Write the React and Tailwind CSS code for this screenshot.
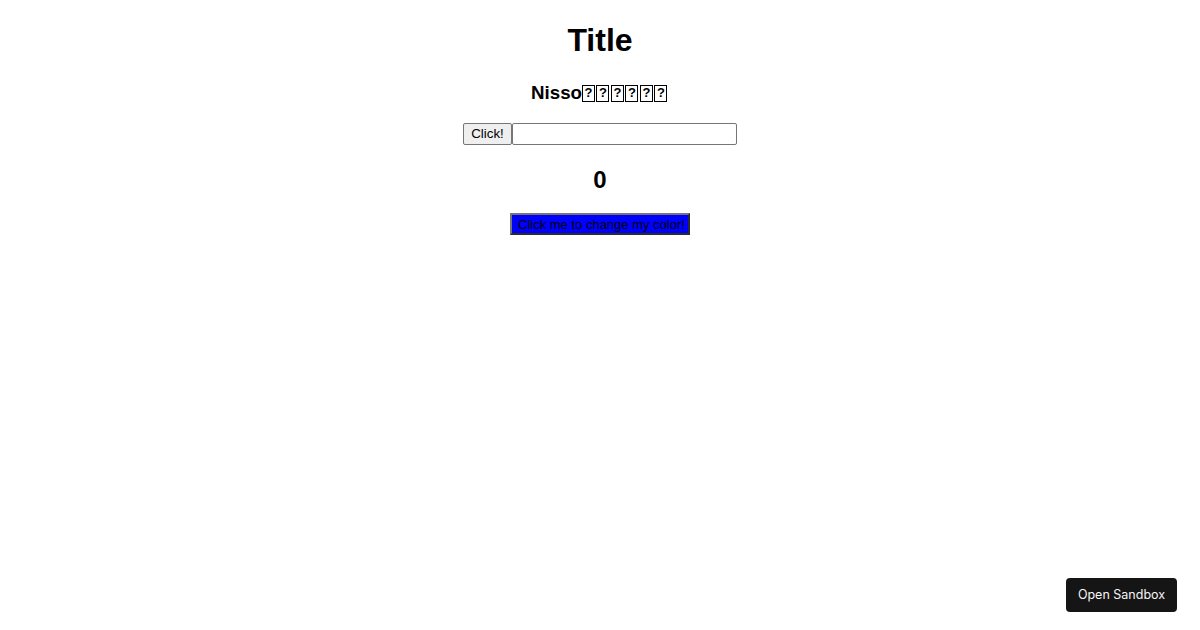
function Tofu() {
  return (
    <span className="mr-[1.5px] inline-block h-[17px] w-[13px] border-[1.5px] border-black text-center align-[2px] text-[13px] leading-[14px] font-bold">?</span>
  );
}

export default function App() {
  return (
    <div className="min-h-[630px] bg-white font-['Liberation_Sans',Arial,sans-serif] text-black">
      <div className="flex flex-col items-center px-2 pt-[21.5px]">
        <h1 className="text-[32px] font-bold leading-[normal]">Title</h1>
        <h3 className="mt-[22.44px] flex h-[24px] items-center text-[18.72px] font-bold leading-[24px]">
          <span>Nisso<Tofu /><Tofu /><Tofu /><Tofu /><Tofu /><Tofu /></span>
        </h3>
        <div className="mt-[17.72px] flex items-center">
          <button className="h-[22px] w-[49px] rounded-[2px] border border-[#767676] bg-[#efefef] px-[6px] text-[13.33px] leading-[15px] whitespace-nowrap">Click!</button>
          <input className="h-[22px] w-[225px] rounded-[2px] border border-[#767676] bg-white px-[2px] text-[13.33px] outline-none" />
        </div>
        <h2 className="mt-[20.92px] text-[24px] font-bold leading-[normal]">0</h2>
        <button className="mt-[19.92px] h-[22px] w-[180px] border-2 border-t-[#767676] border-l-[#767676] border-r-[#2b2b2b] border-b-[#2b2b2b] bg-[#0000ff] px-[6px] text-left text-[13px] leading-[15px] whitespace-nowrap text-black">Click me to change my color!</button>
      </div>
      <button className="fixed right-[23px] bottom-[18px] h-[34px] w-[111px] rounded-[4px] bg-[#151515] pt-[1px] text-[12.5px] text-[#f5f5f5] font-['Inter',sans-serif]">Open Sandbox</button>
    </div>
  );
}
